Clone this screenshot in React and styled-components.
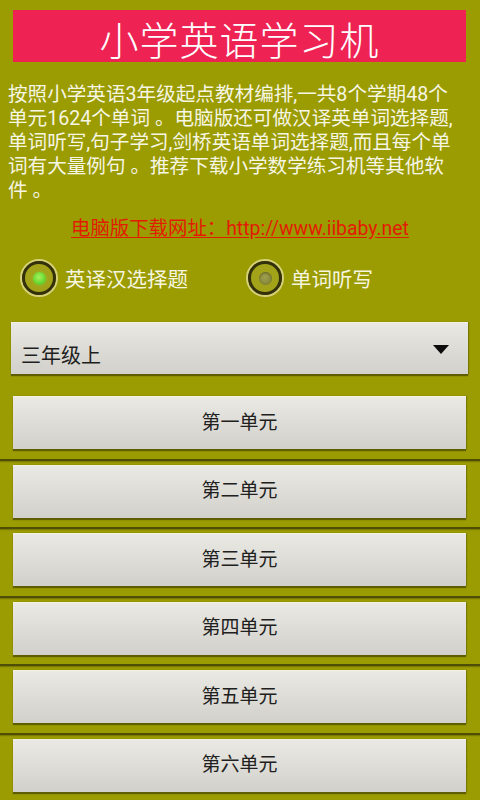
import React from "react";
import styled, { createGlobalStyle } from "styled-components";

const Global = createGlobalStyle`
  html, body {
    margin: 0;
    padding: 0;
    background: #9b9b02;
  }
  body {
    font-family: Roboto, "Noto Sans CJK SC", sans-serif;
    width: 480px;
    min-height: 800px;
    overflow: hidden;
  }
`;

const Page = styled.div`
  display: flex;
  flex-direction: column;
  background: #9b9b02;
  min-height: 800px;
`;

const Banner = styled.div`
  margin: 10px 14px 0 13px;
  height: 52px;
  background: #ee2354;
  color: #ffffff;
  display: flex;
  align-items: center;
  justify-content: center;
  font-size: 39px;
  font-weight: 300;
  letter-spacing: 1px;
  padding-top: 3px;
  box-sizing: border-box;
`;

const Intro = styled.p`
  margin: 21px 0 0;
  padding: 0 6px 0 8px;
  font-size: 19.6px;
  line-height: 24px;
  color: #f6f6e4;
  white-space: nowrap;
`;

const LinkLine = styled.a`
  display: block;
  margin-top: 14px;
  text-align: center;
  font-size: 19.4px;
  line-height: 24px;
  color: #e21c00;
  text-decoration: underline;
  text-underline-offset: 2px;
`;

const RadioGroup = styled.div`
  margin-top: 15px;
  height: 44px;
  padding-left: 20px;
  display: grid;
  grid-template-columns: 226px auto;
  align-items: center;
`;

const RadioOption = styled.label`
  display: flex;
  align-items: center;
  gap: 7px;
  font-size: 20.5px;
  color: #f6f6e0;
`;

const RadioRing = styled.span`
  width: 38px;
  height: 38px;
  box-sizing: border-box;
  border-radius: 50%;
  border: 2px solid #d6d27c;
  display: flex;
  align-items: center;
  justify-content: center;
  flex: none;
`;

const RadioInner = styled.span`
  width: 34px;
  height: 34px;
  box-sizing: border-box;
  border-radius: 50%;
  border: 3px solid #33300c;
  background: #a3a31a;
  display: flex;
  align-items: center;
  justify-content: center;
`;

const RadioDot = styled.span`
  width: 13px;
  height: 13px;
  border-radius: 50%;
  background: ${(p) =>
    p.$on
      ? "radial-gradient(circle at 45% 40%, #a4f25c 0%, #6cd934 55%, #4cae22 100%)"
      : "radial-gradient(circle at 45% 40%, #a0a050 0%, #8a8a3c 60%, #7a7a2e 100%)"};
  box-shadow: ${(p) =>
    p.$on ? "0 0 3px rgba(120,230,60,0.7)" : "inset 0 1px 2px rgba(60,60,20,0.5)"};
`;

const Spinner = styled.div`
  margin: 22px 12px 0 11px;
  height: 52px;
  box-sizing: border-box;
  display: flex;
  align-items: center;
  justify-content: space-between;
  padding: 0 19px 0 10px;
  background: linear-gradient(#e9e8e2, #dbd9d3 60%, #d3d1cb);
  border-top: 1px solid #f3f2e4;
  box-shadow: 0 2px 1px rgba(70, 70, 0, 0.7), 1px 0 1px rgba(80, 80, 0, 0.4);
`;

const SpinnerLabel = styled.span`
  padding-top: 14px;
  font-size: 20px;
  line-height: 24px;
  color: #1e1e1e;
`;

const Arrow = styled.span`
  width: 0;
  height: 0;
  margin-top: 2px;
  border-left: 8px solid transparent;
  border-right: 8px solid transparent;
  border-top: 9px solid #0c0c0c;
`;

const List = styled.ul`
  list-style: none;
  margin: 18px 0 0;
  padding: 0;
`;

const Item = styled.li`
  height: 68.6px;
  box-sizing: border-box;
  padding: 4px 14px 0 13px;
  border-bottom: 2px solid #4e4e06;
  box-shadow: 0 1px 1px rgba(110, 110, 0, 0.7);
`;

const UnitButton = styled.button`
  display: block;
  width: 100%;
  height: 53px;
  border: none;
  border-top: 1px solid #f4f3e2;
  padding: 0 0 6px;
  font-family: Roboto, "Noto Sans CJK SC", sans-serif;
  font-size: 19px;
  color: #202020;
  background: linear-gradient(#eae9e3, #dcdad4 60%, #d2d0ca);
  box-shadow: 0 2px 1px rgba(70, 70, 0, 0.7), 1px 0 1px rgba(80, 80, 0, 0.35);
  cursor: pointer;
`;

const units = ["第一单元", "第二单元", "第三单元", "第四单元", "第五单元", "第六单元"];

const introLines = [
  "按照小学英语3年级起点教材编排,一共8个学期48个",
  "单元1624个单词 。电脑版还可做汉译英单词选择题,",
  "单词听写,句子学习,剑桥英语单词选择题,而且每个单",
  "词有大量例句 。推荐下载小学数学练习机等其他软",
  "件 。",
];

function Radio({ on, children }) {
  return (
    <RadioOption>
      <RadioRing>
        <RadioInner>
          <RadioDot $on={on} />
        </RadioInner>
      </RadioRing>
      {children}
    </RadioOption>
  );
}

export default function App() {
  return (
    <Page>
      <Global />
      <Banner>小学英语学习机</Banner>
      <Intro>
        {introLines.map((l, i) => (
          <React.Fragment key={i}>
            {l}
            {i < introLines.length - 1 && <br />}
          </React.Fragment>
        ))}
      </Intro>
      <LinkLine href="#">电脑版下载网址：http://www.iibaby.net</LinkLine>
      <RadioGroup>
        <Radio on>英译汉选择题</Radio>
        <Radio>单词听写</Radio>
      </RadioGroup>
      <Spinner>
        <SpinnerLabel>三年级上</SpinnerLabel>
        <Arrow />
      </Spinner>
      <List>
        {units.map((u) => (
          <Item key={u}>
            <UnitButton>{u}</UnitButton>
          </Item>
        ))}
      </List>
    </Page>
  );
}
